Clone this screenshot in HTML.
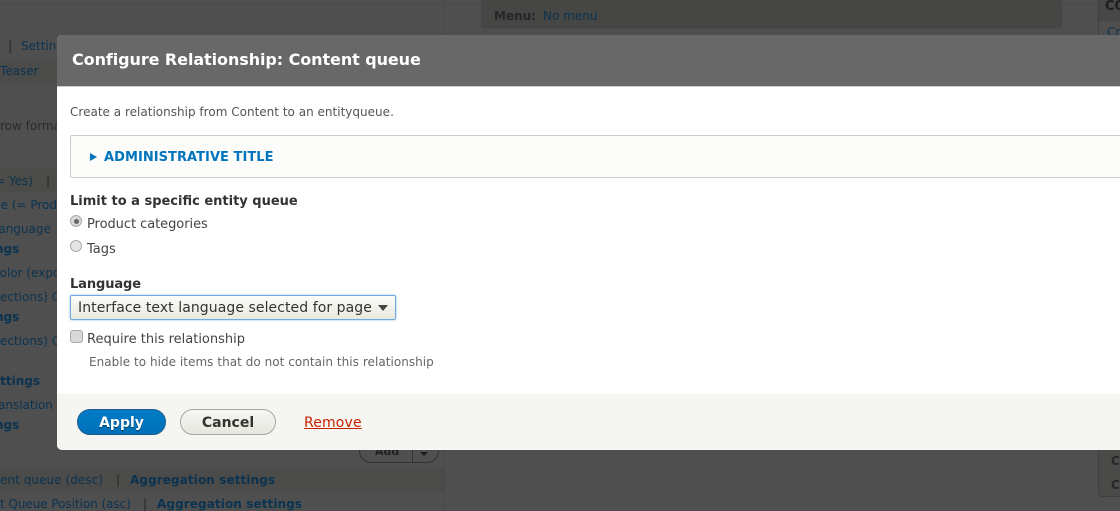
<!DOCTYPE html>
<html><head><meta charset="utf-8">
<style>
html,body{margin:0;padding:0;width:1120px;height:511px;overflow:hidden;background:#4f4f4f}
*{box-sizing:border-box}
body{font-family:"DejaVu Sans","Liberation Sans",sans-serif;font-size:12px;position:relative}
.a{position:absolute;white-space:nowrap}
.l{color:#0b3350}
.b{font-weight:bold}
.d{color:#262626}
.row{position:absolute;left:0;width:444px;background:#4b4b49}
</style></head><body>
<div class="a" style="left:0;top:0;width:1120px;height:5px;border-bottom:1px solid #4a4a4a"></div>
<div class="a" style="left:444px;top:0;width:1px;height:511px;background:#4a4a4a"></div>
<div class="a" style="left:481px;top:0;width:581px;height:29px;background:#464644;border-bottom:1px solid #4a4a4a"></div>
<div class="a" style="left:1098px;top:0;width:22px;height:497px;border-left:1px solid #3f3f3f;border-bottom:1px solid #3f3f3f;border-radius:0 0 0 4px"></div>
<div class="a" style="left:1099px;top:0;width:21px;height:21px;background:#474745"></div>
<div class="a" style="left:1099px;top:449px;width:21px;height:47px;background:#4a4a48"></div>

<div class="row" style="top:60px;height:24px"></div>
<div class="row" style="top:168px;height:24px"></div>
<div class="row" style="top:468px;height:24px"></div>

<div class="a d" style="left:8px;top:39px;font-size:13px">|</div>
<div class="a l" style="left:21px;top:39px">Settings</div>
<div class="a l" style="left:0;top:64px">Teaser</div>
<div class="a" style="left:0;top:119px;color:#2b2b2b">row format</div>
<div class="a l" style="left:-5px;top:174px">= Yes)</div>
<div class="a d" style="left:46px;top:174px">|</div>
<div class="a l" style="left:-7px;top:198px">pe (= Product</div>
<div class="a l" style="left:-5px;top:222px">language</div>
<div class="a l b" style="left:-5px;top:242px">ngs</div>
<div class="a l" style="left:-7px;top:266px">color (export</div>
<div class="a l" style="left:0;top:290px">ections) Co</div>
<div class="a l b" style="left:-5px;top:310px">ngs</div>
<div class="a l" style="left:0;top:334px">ections) Co</div>
<div class="a l b" style="left:-8px;top:374px">ettings</div>
<div class="a l" style="left:-2px;top:398px">anslation</div>
<div class="a l b" style="left:-5px;top:418px">ngs</div>
<div class="a l" style="left:0;top:473px;letter-spacing:.06px">ent queue (desc)</div>
<div class="a d" style="left:116px;top:473px">|</div>
<div class="a l b" style="left:130px;top:473px;letter-spacing:.1px">Aggregation settings</div>
<div class="a l" style="left:0;top:497px;letter-spacing:-.05px">t Queue Position (asc)</div>
<div class="a d" style="left:143px;top:497px">|</div>
<div class="a l b" style="left:157px;top:497px;letter-spacing:.1px">Aggregation settings</div>

<div class="a" style="left:359px;top:430px;width:80px;height:33px;border:1px solid #333;border-radius:0 0 12px 12px;background:#4f4f4f"></div>
<div class="a" style="left:412px;top:430px;width:1px;height:33px;background:#333"></div>
<div class="a b" style="left:375px;top:445px;font-size:11px;color:#1e1e1e">Add</div>
<div class="a" style="left:420px;top:452px;width:0;height:0;border-left:4px solid transparent;border-right:4px solid transparent;border-top:4px solid #1e1e1e"></div>

<div class="a b d" style="left:494px;top:9px">Menu:</div>
<div class="a l" style="left:543px;top:9px">No menu</div>
<div class="a b" style="left:1105px;top:-1px;font-size:13px;color:#1e1e1e">CO</div>
<div class="a l" style="left:1107px;top:25px">Cr</div>
<div class="a b d" style="left:1111px;top:454px">C</div>
<div class="a b d" style="left:1111px;top:478px">C</div>

<div class="a" style="left:57px;top:35px;width:1063px;height:415px;background:#fff;border-radius:5px 0 0 5px;overflow:hidden">
  <div class="a" style="left:0;top:0;width:1063px;height:52px;background:#686868;border-bottom:1px solid #ccc"></div>
  <div class="a b" style="left:15px;top:15px;font-size:16px;color:#fff;letter-spacing:-.08px">Configure Relationship: Content queue</div>
  <div class="a" style="left:13px;top:70px;color:#555;letter-spacing:.01px">Create a relationship from Content to an entityqueue.</div>
  <div class="a" style="left:13px;top:100px;width:1070px;height:43px;background:#fcfcfa;border:1px solid #ccc;border-radius:2px"></div>
  <div class="a" style="left:33px;top:118px;width:0;height:0;border-top:4px solid transparent;border-bottom:4px solid transparent;border-left:7px solid #0074bd"></div>
  <div class="a b" style="left:47px;top:115px;font-size:13px;color:#0074bd;letter-spacing:.05px">ADMINISTRATIVE TITLE</div>
  <div class="a b" style="left:13px;top:159px;font-size:13px;color:#333">Limit to a specific entity queue</div>
  <div class="a" style="left:13px;top:180px;width:12px;height:12px;border-radius:50%;background:#d8d8d8;border:1px solid #aaa"></div>
  <div class="a" style="left:16.5px;top:183.5px;width:5px;height:5px;border-radius:50%;background:#666"></div>
  <div class="a" style="left:30px;top:182px;font-size:13px;color:#444;letter-spacing:-.05px">Product categories</div>
  <div class="a" style="left:13px;top:205px;width:12px;height:12px;border-radius:50%;background:#e4e4e4;border:1px solid #aaa"></div>
  <div class="a" style="left:30px;top:207px;font-size:13px;color:#444">Tags</div>
  <div class="a b" style="left:13px;top:242px;font-size:13px;color:#333;letter-spacing:-.1px">Language</div>
  <div class="a" style="left:13px;top:260px;width:326px;height:25px;border:1px solid #6fa8e3;box-shadow:0 0 2px #8fbdee;border-radius:2px;background:linear-gradient(#fcfcfa,#e9e9dd)"></div>
  <div class="a" style="left:21px;top:265px;font-size:14px;color:#333;letter-spacing:.07px">Interface text language selected for page</div>
  <div class="a" style="left:321px;top:270px;width:0;height:0;border-left:5px solid transparent;border-right:5px solid transparent;border-top:6px solid #444"></div>
  <div class="a" style="left:13px;top:295px;width:13px;height:13px;border-radius:3px;background:#d8d8d8;border:1px solid #aaa"></div>
  <div class="a" style="left:30px;top:297px;font-size:13px;color:#444">Require this relationship</div>
  <div class="a" style="left:32px;top:320px;color:#666;letter-spacing:.04px">Enable to hide items that do not contain this relationship</div>
  <div class="a" style="left:0;top:359px;width:1063px;height:56px;background:#f5f5f2"></div>
  <div class="a b" style="left:20px;top:374px;width:89px;height:26px;border-radius:13px;background:linear-gradient(#007bc6,#0071b8);border:1px solid #1e5c90;color:#fff;font-size:14px;line-height:25px;text-align:center;text-shadow:0 1px 1px rgba(0,0,0,.5)"><span style="position:relative;top:1px">Apply</span></div>
  <div class="a b" style="left:123px;top:374px;width:96px;height:26px;border-radius:13px;background:linear-gradient(#f6f6f3,#e7e7df);border:1px solid #a6a6a6;color:#333;font-size:14px;line-height:25px;text-align:center"><span style="position:relative;top:1px">Cancel</span></div>
  <div class="a" style="left:247px;top:380px;font-size:14px;color:#c72100;text-decoration:underline;letter-spacing:.15px">Remove</div>
</div>
</body></html>
